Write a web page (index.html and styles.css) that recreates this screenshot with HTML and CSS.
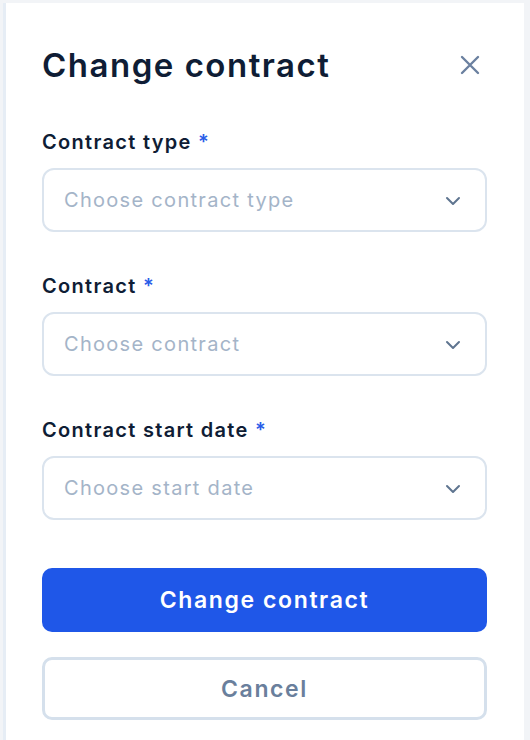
FILE: index.html
```html
<!DOCTYPE html>
<html lang="en">
<head>
  <meta charset="UTF-8">
  <meta name="viewport" content="width=device-width, initial-scale=1.0">
  <title>Change contract</title>
  <link rel="stylesheet" href="styles.css">
</head>
<body>
  <div class="modal">
    <div class="modal-header">
      <h2>Change contract</h2>
      <button class="close-btn" type="button" aria-label="Close">
        <svg width="20" height="20" viewBox="0 0 20 20" fill="none">
          <path d="M2 2L18 18M18 2L2 18" stroke="currentColor" stroke-width="2.4" stroke-linecap="round"/>
        </svg>
      </button>
    </div>

    <form class="contract-form">
      <div class="form-group">
        <label>Contract type <span class="req">*</span></label>
        <div class="select">
          <span class="placeholder">Choose contract type</span>
          <svg class="chevron" width="16" height="10" viewBox="0 0 16 10" fill="none">
            <path d="M2 2L8 8L14 2" stroke="currentColor" stroke-width="2" stroke-linecap="round" stroke-linejoin="round"/>
          </svg>
        </div>
      </div>

      <div class="form-group">
        <label>Contract <span class="req">*</span></label>
        <div class="select">
          <span class="placeholder">Choose contract</span>
          <svg class="chevron" width="16" height="10" viewBox="0 0 16 10" fill="none">
            <path d="M2 2L8 8L14 2" stroke="currentColor" stroke-width="2" stroke-linecap="round" stroke-linejoin="round"/>
          </svg>
        </div>
      </div>

      <div class="form-group">
        <label>Contract start date <span class="req">*</span></label>
        <div class="select">
          <span class="placeholder">Choose start date</span>
          <svg class="chevron" width="16" height="10" viewBox="0 0 16 10" fill="none">
            <path d="M2 2L8 8L14 2" stroke="currentColor" stroke-width="2" stroke-linecap="round" stroke-linejoin="round"/>
          </svg>
        </div>
      </div>

      <div class="actions">
        <button type="submit" class="btn btn-primary">Change contract</button>
        <button type="button" class="btn btn-outline">Cancel</button>
      </div>
    </form>
  </div>
</body>
</html>
```

FILE: styles.css
```css
:root {
  --primary-color: #1f57e8;
  --text-color: #0f1d35;
  --muted: #6a7f9c;
  --placeholder: #a4b4c8;
  --border: #dbe4ee;
  --page-bg: #f2f4f7;
}

body {
  font-family: Inter, 'Noto Sans', sans-serif;
  background: var(--page-bg);
  margin: 0;
  padding: 0;
  color: var(--text-color);
}

.modal {
  background: white;
  margin: 3px 6px 0 3px;
  border-left: 3px solid #e6edf5;
  padding: 42px 37px 0 36px;
  height: 737px;
  box-sizing: border-box;
}

.modal-header {
  display: flex;
  align-items: center;
  justify-content: space-between;
  margin-bottom: 45px;
}

h2 {
  margin: 0;
  font-size: 33px;
  line-height: 40px;
  font-weight: 600;
  letter-spacing: 1.5px;
}

.close-btn {
  background: none;
  border: none;
  padding: 0;
  margin-right: 7px;
  color: #6b80a0;
  display: flex;
  cursor: pointer;
}

.form-group {
  margin-bottom: 42px;
}

label {
  display: block;
  font-size: 20px;
  line-height: 24px;
  font-weight: 600;
  letter-spacing: 1.3px;
  margin-bottom: 14px;
}

.req {
  color: #2a5de8;
}

.select {
  height: 64px;
  border: 2px solid var(--border);
  border-radius: 12px;
  box-sizing: border-box;
  display: flex;
  align-items: center;
  justify-content: space-between;
  padding: 0 24px 0 20px;
}

.placeholder {
  font-size: 20px;
  letter-spacing: 1.3px;
  color: var(--placeholder);
}

.chevron {
  color: #5f7590;
  margin-top: 2px;
}

.actions {
  margin-top: 48px;
  display: flex;
  flex-direction: column;
  gap: 25px;
}

.btn {
  height: 64px;
  border-radius: 10px;
  font-family: inherit;
  font-size: 23px;
  font-weight: 600;
  letter-spacing: 1.6px;
  cursor: pointer;
  width: 100%;
}

.btn-primary {
  background: var(--primary-color);
  color: white;
  border: none;
}

.btn-outline {
  background: white;
  color: var(--muted);
  border: 3px solid #d5e0ec;
  height: 63px;
}
```
